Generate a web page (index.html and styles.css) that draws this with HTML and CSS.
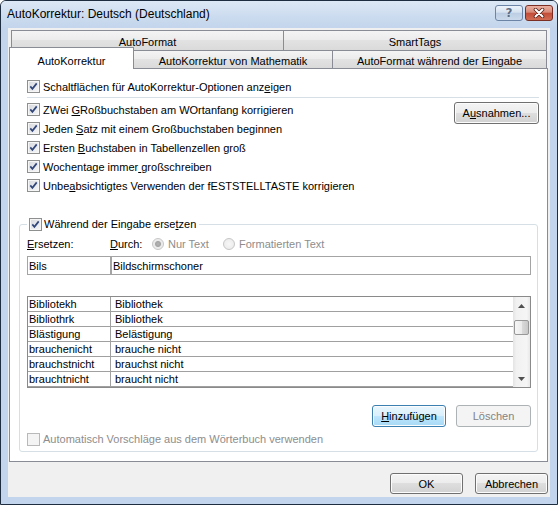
FILE: index.html
```html
<!DOCTYPE html>
<html>
<head>
    <title>AutoKorrektur: Deutsch (Deutschland)</title>
    <meta charset="UTF-8">
    <link rel="stylesheet" href="styles.css">
</head>
<body>
<div class="window">
    <div class="titlebar">
        <span class="title">AutoKorrektur: Deutsch (Deutschland)</span>
        <div class="caption-buttons">
            <span class="cap-btn help">?</span>
            <span class="cap-btn close">
                <svg width="14" height="10" viewBox="0 0 14 10">
                    <path d="M3.5 1.5l7 7M10.5 1.5l-7 7" stroke="#5a2218" stroke-width="3.6" stroke-linecap="round"/>
                    <path d="M3.5 1.5l7 7M10.5 1.5l-7 7" stroke="#fff" stroke-width="2" stroke-linecap="round"/>
                </svg>
            </span>
        </div>
    </div>

    <div class="client">
        <div class="tabs">
            <div class="tab-row back">
                <div class="tab tab-autoformat">AutoFormat</div>
                <div class="tab tab-smarttags">SmartTags</div>
            </div>
            <div class="tab-row front">
                <div class="tab active tab-autokorrektur">AutoKorrektur</div>
                <div class="tab tab-mathe">AutoKorrektur von Mathematik</div>
                <div class="tab tab-eingabe">AutoFormat während der Eingabe</div>
            </div>
        </div>

        <div class="panel">
            <div class="check-row">
                <span class="check"><svg viewBox="0 0 11 11"><path d="M2.3 5.4l2.1 2.4 4.3-5.4"/></svg></span>
                <span>Schaltflächen für AutoKorrektur-Optionen anz<u>e</u>igen</span>
            </div>
            <div class="separator"></div>

            <div class="options">
                <div class="option-list">
                    <div class="check-row">
                        <span class="check"><svg viewBox="0 0 11 11"><path d="M2.3 5.4l2.1 2.4 4.3-5.4"/></svg></span>
                        <span>ZWei <u>G</u>Roßbuchstaben am WOrtanfang korrigieren</span>
                    </div>
                    <div class="check-row">
                        <span class="check"><svg viewBox="0 0 11 11"><path d="M2.3 5.4l2.1 2.4 4.3-5.4"/></svg></span>
                        <span>Jeden <u>S</u>atz mit einem Großbuchstaben beginnen</span>
                    </div>
                    <div class="check-row">
                        <span class="check"><svg viewBox="0 0 11 11"><path d="M2.3 5.4l2.1 2.4 4.3-5.4"/></svg></span>
                        <span>Ersten <u>B</u>uchstaben in Tabellenzellen groß</span>
                    </div>
                    <div class="check-row">
                        <span class="check"><svg viewBox="0 0 11 11"><path d="M2.3 5.4l2.1 2.4 4.3-5.4"/></svg></span>
                        <span>Wochentage immer<u> </u>großschreiben</span>
                    </div>
                    <div class="check-row">
                        <span class="check"><svg viewBox="0 0 11 11"><path d="M2.3 5.4l2.1 2.4 4.3-5.4"/></svg></span>
                        <span>Unbe<u>a</u>bsichtigtes Verwenden der fESTSTELLTASTE korrigieren</span>
                    </div>
                </div>
                <button type="button" class="btn btn-except">A<u>u</u>snahmen...</button>
            </div>

            <fieldset class="group">
                <legend>
                    <span class="legend-label">
                        <span class="check"><svg viewBox="0 0 11 11"><path d="M2.3 5.4l2.1 2.4 4.3-5.4"/></svg></span>
                        <span>Während der Eingabe erse<u>t</u>zen</span>
                    </span>
                </legend>

                <div class="subst-labels">
                    <span class="lbl-replace"><u>E</u>rsetzen:</span>
                    <span class="lbl-with"><u>D</u>urch:</span>
                    <span class="radio-opt first">
                        <span class="radio on"></span>
                        <span class="disabled-text">Nur Text</span>
                    </span>
                    <span class="radio-opt">
                        <span class="radio"></span>
                        <span class="disabled-text">Formatierten Text</span>
                    </span>
                </div>

                <div class="subst-inputs">
                    <div class="field field-replace">Bils</div>
                    <div class="field field-with">Bildschirmschoner</div>
                </div>

                <div class="list">
                    <div class="rows">
                        <div class="row"><span class="c1">Bibliotekh</span><span class="c2">Bibliothek</span></div>
                        <div class="row"><span class="c1">Bibliothrk</span><span class="c2">Bibliothek</span></div>
                        <div class="row"><span class="c1">Blästigung</span><span class="c2">Belästigung</span></div>
                        <div class="row"><span class="c1">brauchenicht</span><span class="c2">brauche nicht</span></div>
                        <div class="row"><span class="c1">brauchstnicht</span><span class="c2">brauchst nicht</span></div>
                        <div class="row"><span class="c1">brauchtnicht</span><span class="c2">braucht nicht</span></div>
                    </div>
                    <div class="scrollbar">
                        <div class="sb-arrow"><svg width="7" height="4" viewBox="0 0 7 4"><path d="M0 4L3.5 0 7 4z"/></svg></div>
                        <div class="sb-track"><div class="sb-thumb"></div></div>
                        <div class="sb-arrow"><svg width="7" height="4" viewBox="0 0 7 4"><path d="M0 0L3.5 4 7 0z"/></svg></div>
                    </div>
                </div>

                <div class="list-actions">
                    <button type="button" class="btn btn-default btn-add"><u>H</u>inzufügen</button>
                    <button type="button" class="btn btn-disabled btn-delete">Löschen</button>
                </div>

                <div class="check-row auto">
                    <span class="check off"></span>
                    <span class="disabled-text">Automatisch Vorschläge aus dem Wörterbuch verwenden</span>
                </div>
            </fieldset>
        </div>

        <div class="footer">
            <button type="button" class="btn btn-footer">OK</button>
            <button type="button" class="btn btn-footer">Abbrechen</button>
        </div>
    </div>
</div>
</body>
</html>
```

FILE: styles.css
```css
body {
    margin: 0;
    font-family: "Liberation Sans", Arial, sans-serif;
    font-size: 11px;
    color: #000;
    background: #fff;
}

/* Window frame */
.window {
    width: 558px;
    height: 505px;
    box-sizing: border-box;
    border: 1px solid #1f2d40;
    border-radius: 6px 6px 0 0;
    background: #c3d5ec;
    padding: 0 7px 7px;
    display: flex;
    flex-direction: column;
}

.titlebar {
    height: 27px;
    margin: 0 -7px;
    padding: 0 4px 2px 6px;
    box-sizing: border-box;
    display: flex;
    align-items: center;
    justify-content: space-between;
    background: linear-gradient(#dde8f5, #cbdbef 60%, #c3d5ec);
    border-radius: 5px 5px 0 0;
}

.title {
    font-size: 12px;
}

.caption-buttons {
    display: flex;
    gap: 2px;
    align-self: flex-start;
    margin-top: 4px;
}

.cap-btn {
    width: 28px;
    height: 16px;
    box-sizing: border-box;
    border: 1px solid #6c84a6;
    border-radius: 3px;
    display: flex;
    align-items: center;
    justify-content: center;
}

.help {
    background: linear-gradient(#edf3fa, #d6e2f0 45%, #bccde3 50%, #cbd9eb);
    color: #5c6d86;
    font-family: "DejaVu Sans", sans-serif;
    font-weight: bold;
    font-size: 12px;
    text-shadow: 0 0 1px #fff;
}

.close {
    background: linear-gradient(#eab0a2, #d88a78 45%, #c24b36 50%, #d16c52);
    border-color: #7b2f24;
}

.close svg {
    display: block;
    fill: none;
}

/* Client area */
.client {
    flex: 1;
    background: #f0f0f0;
    padding: 2px 2px 0 1px;
    display: flex;
    flex-direction: column;
}

.tab-row {
    display: flex;
}

.tab-row.back {
    margin-left: 2px;
    height: 20px;
}

.tab-row.front {
    height: 18px;
    align-items: flex-end;
}

.tab {
    box-sizing: border-box;
    border: 1px solid #898c95;
    border-bottom: none;
    background: linear-gradient(#f4f4f4, #ececec 45%, #e2e2e2 50%, #dadada);
    display: flex;
    align-items: center;
    justify-content: center;
    white-space: nowrap;
}

.tab + .tab {
    margin-left: -1px;
}

.tab-row.back .tab {
    height: 20px;
    padding-top: 3px;
}

.tab-autoformat { width: 273px; }
.tab-smarttags { width: 264px; }

.tab-mathe,
.tab-eingabe {
    height: 18px;
    padding-top: 2px;
}

.tab-mathe { width: 200px; }
.tab-eingabe { width: 215px; }

.tab.active {
    width: 125px;
    height: 22px;
    padding-top: 4px;
    margin-bottom: -1px;
    background: #fff;
    position: relative;
    z-index: 1;
}

/* Tab page */
.panel {
    height: 394px;
    box-sizing: border-box;
    border: 1px solid #898c95;
    background: #fff;
    padding: 8px 9px 0;
}

.check-row {
    display: flex;
    align-items: center;
    height: 19px;
    padding-left: 8px;
    white-space: nowrap;
}

.check {
    flex: none;
    width: 13px;
    height: 13px;
    box-sizing: border-box;
    margin-right: 3px;
    border: 1px solid #8e8f8f;
    background: linear-gradient(135deg, #d6d9de, #f7f7f7);
    box-shadow: inset 0 0 0 1px #f6f6f6;
}

.check svg {
    display: block;
    width: 11px;
    height: 11px;
    fill: none;
    stroke: #31467a;
    stroke-width: 1.7;
}

.check.off {
    border-color: #b9b9b9;
    background: #f4f4f4;
    box-shadow: none;
}

.separator {
    height: 1px;
    background: #d5dfe5;
    margin: 1px -1px 2px 8px;
}

.options {
    display: flex;
    justify-content: space-between;
    align-items: flex-start;
}

/* Buttons */
.btn {
    font-family: inherit;
    font-size: 11px;
    color: #000;
    height: 22px;
    padding: 0;
    box-sizing: border-box;
    border: 1px solid #707070;
    border-radius: 3px;
    background: linear-gradient(#f4f4f4, #ececec 49%, #dedede 50%, #d2d2d2);
    box-shadow: inset 0 0 0 1px #fcfcfc;
}

.btn-except {
    width: 85px;
    margin-top: 2px;
    margin-right: -1px;
}

.btn-default {
    border-color: #3c7fb1;
    background: linear-gradient(#eaf6fd, #d9f0fc 49%, #bee6fd 50%, #a7d9f5);
}

.btn-disabled {
    border-color: #adb2b5;
    background: #f4f4f4;
    color: #838383;
    box-shadow: none;
}

.btn-add { width: 74px; }
.btn-delete { width: 75px; }

/* Replace group */
.group {
    margin: 21px 0 0;
    padding: 0 6px 4px 7px;
    border: 1px solid #d5dfe5;
    border-radius: 3px;
    min-width: 0;
}

.group legend {
    padding: 0 3px 0 2px;
}

.legend-label {
    display: flex;
    align-items: center;
    height: 16px;
}

.legend-label .check {
    margin-right: 2px;
}

.subst-labels {
    display: flex;
    align-items: center;
    height: 16px;
    margin-top: 4px;
    white-space: nowrap;
}

.lbl-replace { width: 83px; }
.lbl-with { width: 42px; }

.radio-opt {
    display: flex;
    align-items: center;
}

.radio-opt.first { width: 71px; }

.radio {
    width: 12px;
    height: 12px;
    box-sizing: border-box;
    margin-right: 4px;
    border: 1px solid #c6c6c6;
    border-radius: 50%;
    background: radial-gradient(circle, #f7f7f7, #e8e8e8);
}

.radio.on {
    background: radial-gradient(circle, #b4b4b4 0, #a4a4a4 2.5px, #e9e9e9 3.5px, #f4f4f4);
}

.disabled-text {
    color: #8d8d8d;
}

.subst-inputs {
    display: flex;
    height: 19px;
    margin-top: 4px;
}

.field {
    height: 19px;
    box-sizing: border-box;
    border: 1px solid #a4a4a4;
    padding-left: 1px;
    display: flex;
    align-items: center;
}

.field-replace { width: 84px; }
.field-with { flex: 1; }

/* Replacement list */
.list {
    display: flex;
    height: 92px;
    box-sizing: border-box;
    margin-top: 21px;
    border: 1px solid #8a8a8a;
}

.rows {
    flex: 1;
}

.row {
    display: flex;
    height: 15px;
    box-sizing: border-box;
    border-bottom: 1px solid #a0a0a0;
    line-height: 14px;
    white-space: nowrap;
}

.c1 {
    width: 83px;
    box-sizing: border-box;
    border-right: 1px solid #a0a0a0;
    padding-left: 1px;
}

.c2 {
    padding-left: 4px;
}

.scrollbar {
    width: 17px;
    display: flex;
    flex-direction: column;
    background: linear-gradient(to right, #e4e4e4, #f1f1f1 20%, #f5f5f5 80%, #e8e8e8);
}

.sb-arrow {
    height: 17px;
    display: flex;
    align-items: center;
    justify-content: center;
}

.sb-arrow svg {
    fill: #4f4f4f;
}

.sb-track {
    flex: 1;
    padding-top: 6px;
}

.sb-thumb {
    height: 15px;
    margin: 0 1px;
    box-sizing: border-box;
    border: 1px solid #979797;
    border-radius: 2px;
    background: linear-gradient(to right, #f6f6f6, #ebebeb 50%, #d9d9d9 55%, #c8c8c8);
}

.list-actions {
    display: flex;
    justify-content: flex-end;
    gap: 10px;
    margin-top: 17px;
}

.check-row.auto {
    height: 16px;
    margin-top: 4px;
    padding-left: 0;
}

/* Dialog buttons */
.footer {
    display: flex;
    justify-content: flex-end;
    gap: 12px;
    margin-top: 11px;
}

.btn-footer {
    width: 73px;
    height: 21px;
}
```
